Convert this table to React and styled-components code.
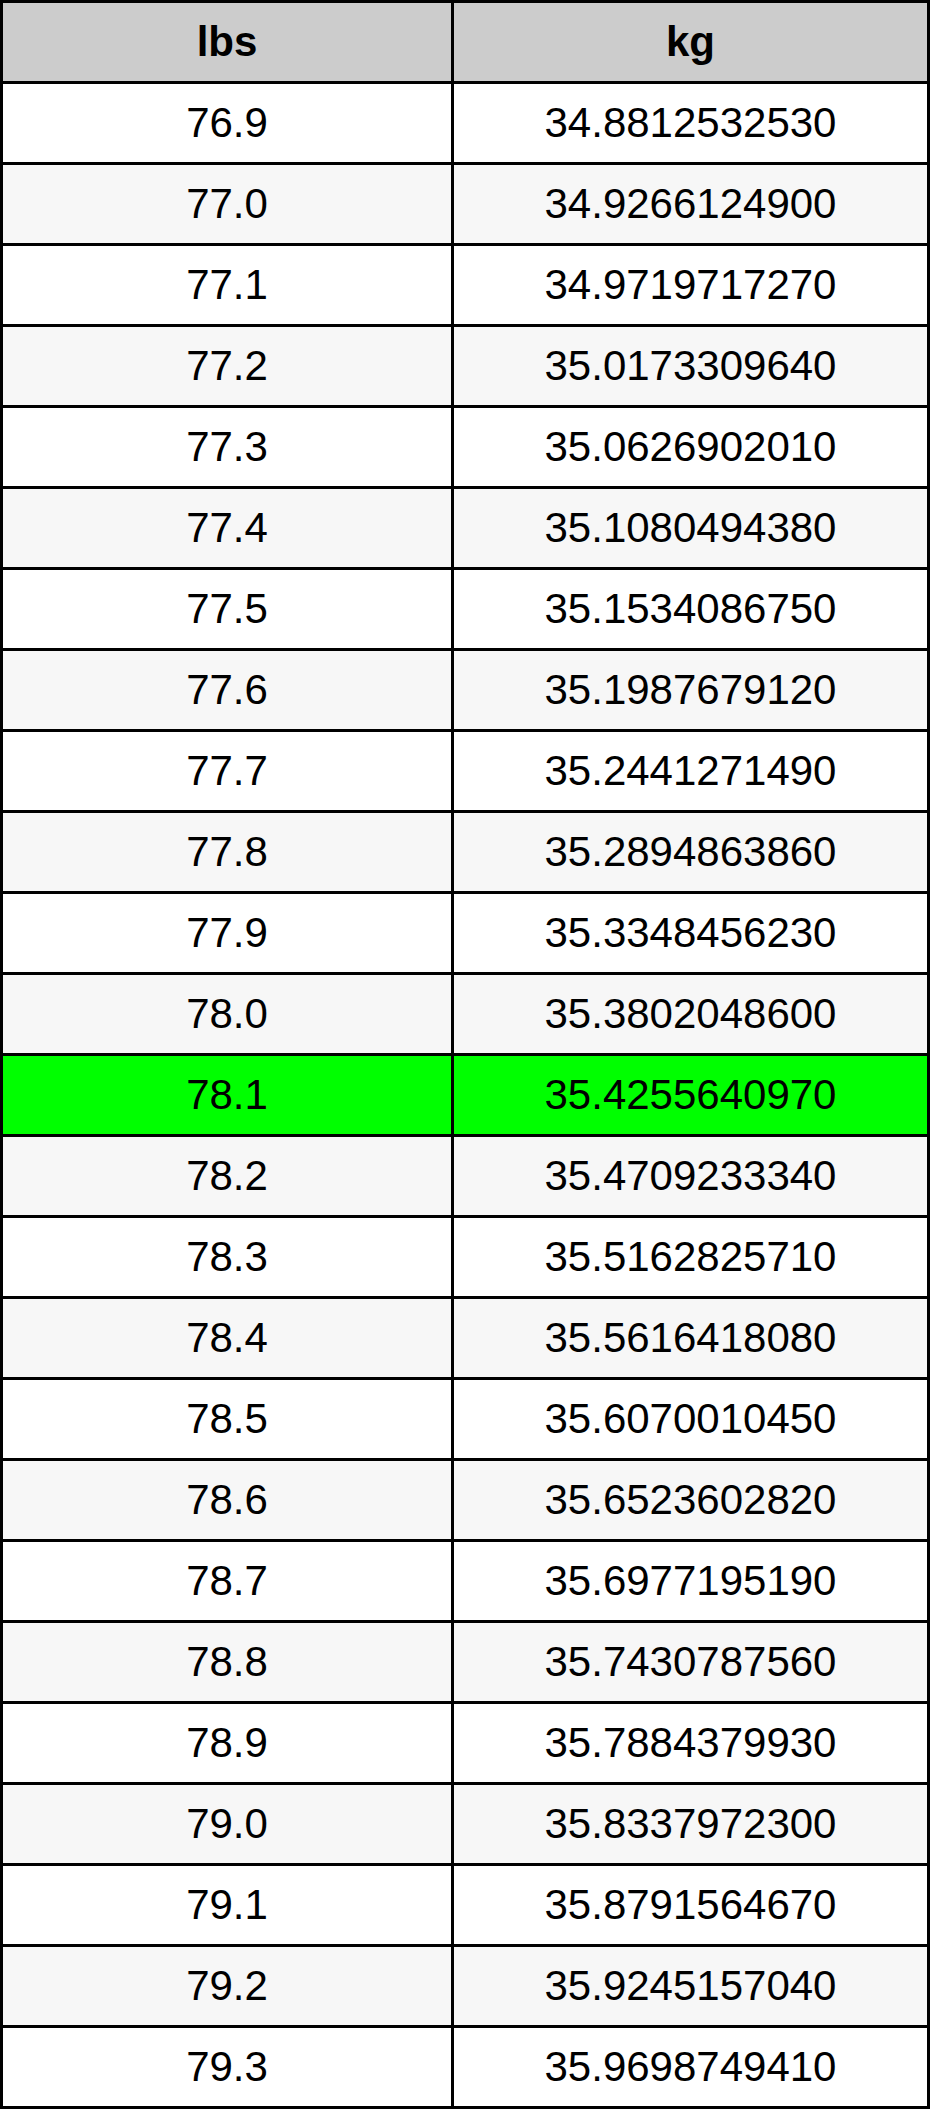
import React from 'react';
import styled, { createGlobalStyle } from 'styled-components';

const GlobalStyle = createGlobalStyle`
  body {
    margin: 0;
    background: #fff;
    font-family: 'Liberation Sans', Arial, sans-serif;
  }
`;

const rows = [
  ['76.9', '34.8812532530'],
  ['77.0', '34.9266124900'],
  ['77.1', '34.9719717270'],
  ['77.2', '35.0173309640'],
  ['77.3', '35.0626902010'],
  ['77.4', '35.1080494380'],
  ['77.5', '35.1534086750'],
  ['77.6', '35.1987679120'],
  ['77.7', '35.2441271490'],
  ['77.8', '35.2894863860'],
  ['77.9', '35.3348456230'],
  ['78.0', '35.3802048600'],
  ['78.1', '35.4255640970'],
  ['78.2', '35.4709233340'],
  ['78.3', '35.5162825710'],
  ['78.4', '35.5616418080'],
  ['78.5', '35.6070010450'],
  ['78.6', '35.6523602820'],
  ['78.7', '35.6977195190'],
  ['78.8', '35.7430787560'],
  ['78.9', '35.7884379930'],
  ['79.0', '35.8337972300'],
  ['79.1', '35.8791564670'],
  ['79.2', '35.9245157040'],
  ['79.3', '35.9698749410'],
];

const HIGHLIGHT = '78.1';

export default function App() {
  return (
    <>
      <GlobalStyle />
      <StyledTable role='table'>
        <HeaderCell role='columnheader'>lbs</HeaderCell>
        <HeaderCell role='columnheader'>kg</HeaderCell>
        {rows.map(([lbs, kg], i) => {
          const tone = lbs === HIGHLIGHT ? 'hit' : i % 2 === 1 ? 'alt' : 'plain';
          return (
            <React.Fragment key={lbs}>
              <Cell tone={tone}>{lbs}</Cell>
              <Cell tone={tone}>{kg}</Cell>
            </React.Fragment>
          );
        })}
      </StyledTable>
    </>
  );
}

const StyledTable = styled.div`
  display: grid;
  grid-template-columns: 448px 473px;
  grid-auto-rows: 78px;
  gap: 3px;
  padding: 3px;
  width: 930px;
  box-sizing: border-box;
  background: #000;
`;

const HeaderCell = styled.div`
  display: flex;
  align-items: center;
  justify-content: center;
  background: #cccccc;
  color: #000;
  font-size: 42px;
  font-weight: bold;
`;

const toneColors = {
  plain: '#ffffff',
  alt: '#f7f7f7',
  hit: '#00ff00',
};

const Cell = styled.div`
  display: flex;
  align-items: center;
  justify-content: center;
  background: ${(p) => toneColors[p.tone]};
  color: #000;
  font-size: 42px;
`;
